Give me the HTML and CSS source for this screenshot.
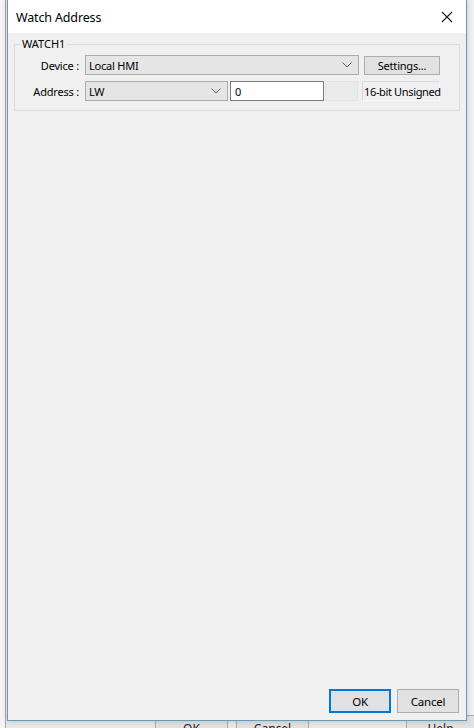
FILE: index.html
```html
<!DOCTYPE html>
<html>
<head>
<meta charset="utf-8">
<link rel="stylesheet" href="styles.css">
</head>
<body>
<div class="desktop">
  <div class="backwin">
    <div class="back-fill"></div>
    <div class="back-buttons">
      <div class="back-btn b-ok">OK</div>
      <div class="back-btn b-cancel">Cancel</div>
      <div class="back-spacer"></div>
      <div class="back-btn b-help">Help</div>
    </div>
  </div>

  <div class="dialog">
    <div class="titlebar">
      <span class="title">Watch Address</span>
      <svg class="close" width="12" height="12" viewBox="0 0 12 12">
        <path d="M1 1 L11 11 M11 1 L1 11" stroke="#1a1a1a" stroke-width="1.1" fill="none"/>
      </svg>
    </div>
    <div class="content">
      <fieldset class="group">
        <legend class="legend">WATCH1</legend>
        <div class="row row-device">
          <span class="lbl">Device :</span>
          <div class="combo combo-device">
            <span class="combo-text">Local HMI</span>
            <svg class="chev" width="10" height="6" viewBox="0 0 10 6"><path d="M0.5 0.5 L5 5 L9.5 0.5" stroke="#606060" stroke-width="1" fill="none"/></svg>
          </div>
          <div class="btn btn-settings">Settings...</div>
        </div>
        <div class="row row-address">
          <span class="lbl">Address :</span>
          <div class="combo combo-addr">
            <span class="combo-text">LW</span>
            <svg class="chev" width="10" height="6" viewBox="0 0 10 6"><path d="M0.5 0.5 L5 5 L9.5 0.5" stroke="#606060" stroke-width="1" fill="none"/></svg>
          </div>
          <div class="input">0</div>
          <div class="graybox"></div>
          <div class="typebox">16-bit Unsigned</div>
        </div>
      </fieldset>
      <div class="spacer"></div>
      <div class="buttons">
        <div class="btn btn-ok">OK</div>
        <div class="btn btn-cancel">Cancel</div>
      </div>
    </div>
  </div>
</div>
</body>
</html>
```

FILE: styles.css
```css
* { box-sizing: border-box; }
html, body {
  margin: 0;
  padding: 0;
}
body {
  font-family: "Noto Sans", "Open Sans", sans-serif;
  font-size: 11px;
  color: #000;
  background: #f3f3f3;
}
.desktop {
  position: relative;
  width: 474px;
  height: 728px;
  overflow: hidden;
  background: #f6f4f5;
}

/* underlying window */
.backwin {
  position: absolute;
  left: 5px;
  top: 0;
  width: 480px;
  height: 760px;
  border-left: 1px solid #a9a9a9;
  background: #f1f1f1;
  display: flex;
  flex-direction: column;
}
.back-fill { flex: 1; }
.back-buttons {
  display: flex;
  height: 40px;
  padding: 0 0 0 149px;
  gap: 8px;
  margin-bottom: 5px;
  background: #e8e8e8;
}
.back-btn {
  height: 26px;
  border: 1px solid #adadad;
  background: #e1e1e1;
  display: flex;
  align-items: center;
  justify-content: center;
  font-size: 12px;
  color: #222;
}
.b-ok, .b-cancel { width: 73px; }
.back-spacer { width: 81px; }
.b-help { width: 69px; }

/* dialog */
.dialog {
  position: absolute;
  left: 7px;
  top: -1px;
  width: 460px;
  height: 722px;
  border: 1px solid #6b9ab8;
  background: #f0f0f0;
  display: flex;
  flex-direction: column;
  box-shadow: 0 0 6px rgba(0,0,0,0.18);
}
.titlebar {
  height: 33px;
  flex: none;
  background: #ffffff;
  display: flex;
  align-items: center;
  padding: 0 13px 0 8px;
}
.title {
  font-size: 12.5px;
  color: #000;
  flex: 1;
  letter-spacing: -0.15px;
  padding-top: 1px;
}
.close { display: block; }

.content {
  flex: 1;
  display: flex;
  flex-direction: column;
  padding: 4px 6px 7px 6px;
}
.group {
  margin: 0;
  padding: 4px 0 9px 0;
  border: 1px solid #dcdcdc;
  min-width: 0;
  width: 446px;
}
.legend {
  margin-left: 5px;
  padding: 0 2px;
  font-size: 11px;
  line-height: 14px;
  color: #000;
}
.row {
  display: flex;
  align-items: center;
  height: 20px;
}
.row-address { margin-top: 6px; }
.lbl {
  width: 64px;
  text-align: right;
  flex: none;
  letter-spacing: -0.2px;
}
.combo {
  height: 20px;
  margin-left: 6px;
  background: #e5e5e5;
  border: 1px solid #acacac;
  display: flex;
  align-items: center;
  padding: 0 6px 0 3px;
  flex: none;
}
.combo-text { flex: 1; letter-spacing: -0.2px; }
.chev { display: block; }
.combo-device { width: 274px; }
.combo-addr { width: 143px; }
.btn {
  height: 19px;
  background: #e1e1e1;
  border: 1px solid #adadad;
  display: flex;
  align-items: center;
  justify-content: center;
  flex: none;
  letter-spacing: -0.2px;
}
.btn-settings { width: 76px; margin-left: 5px; }
.input {
  width: 94px;
  height: 20px;
  margin-left: 2px;
  background: #fff;
  border: 1px solid #7a7a7a;
  display: flex;
  align-items: center;
  padding-left: 4px;
  flex: none;
}
.graybox {
  width: 33px;
  height: 20px;
  margin-left: 1px;
  background: #ebebeb;
  border: 1px solid #e3e3e3;
  flex: none;
}
.typebox {
  width: 78px;
  height: 20px;
  margin-left: 4px;
  border-top: 1px solid #d9d9d9;
  border-left: 1px solid #d9d9d9;
  border-right: 1px solid #f7f7f7;
  border-bottom: 1px solid #f7f7f7;
  display: flex;
  align-items: center;
  padding-left: 1px;
  white-space: nowrap;
  letter-spacing: -0.35px;
  flex: none;
}
.spacer { flex: 1; }
.buttons {
  display: flex;
  justify-content: flex-end;
  gap: 6px;
  padding-right: 1px;
}
.btn-ok, .btn-cancel {
  width: 62px;
  height: 24px;
  font-size: 11.5px;
}
.btn-ok {
  border: 1px solid #0078d7;
  box-shadow: inset 0 0 0 1px #0078d7;
}
```
